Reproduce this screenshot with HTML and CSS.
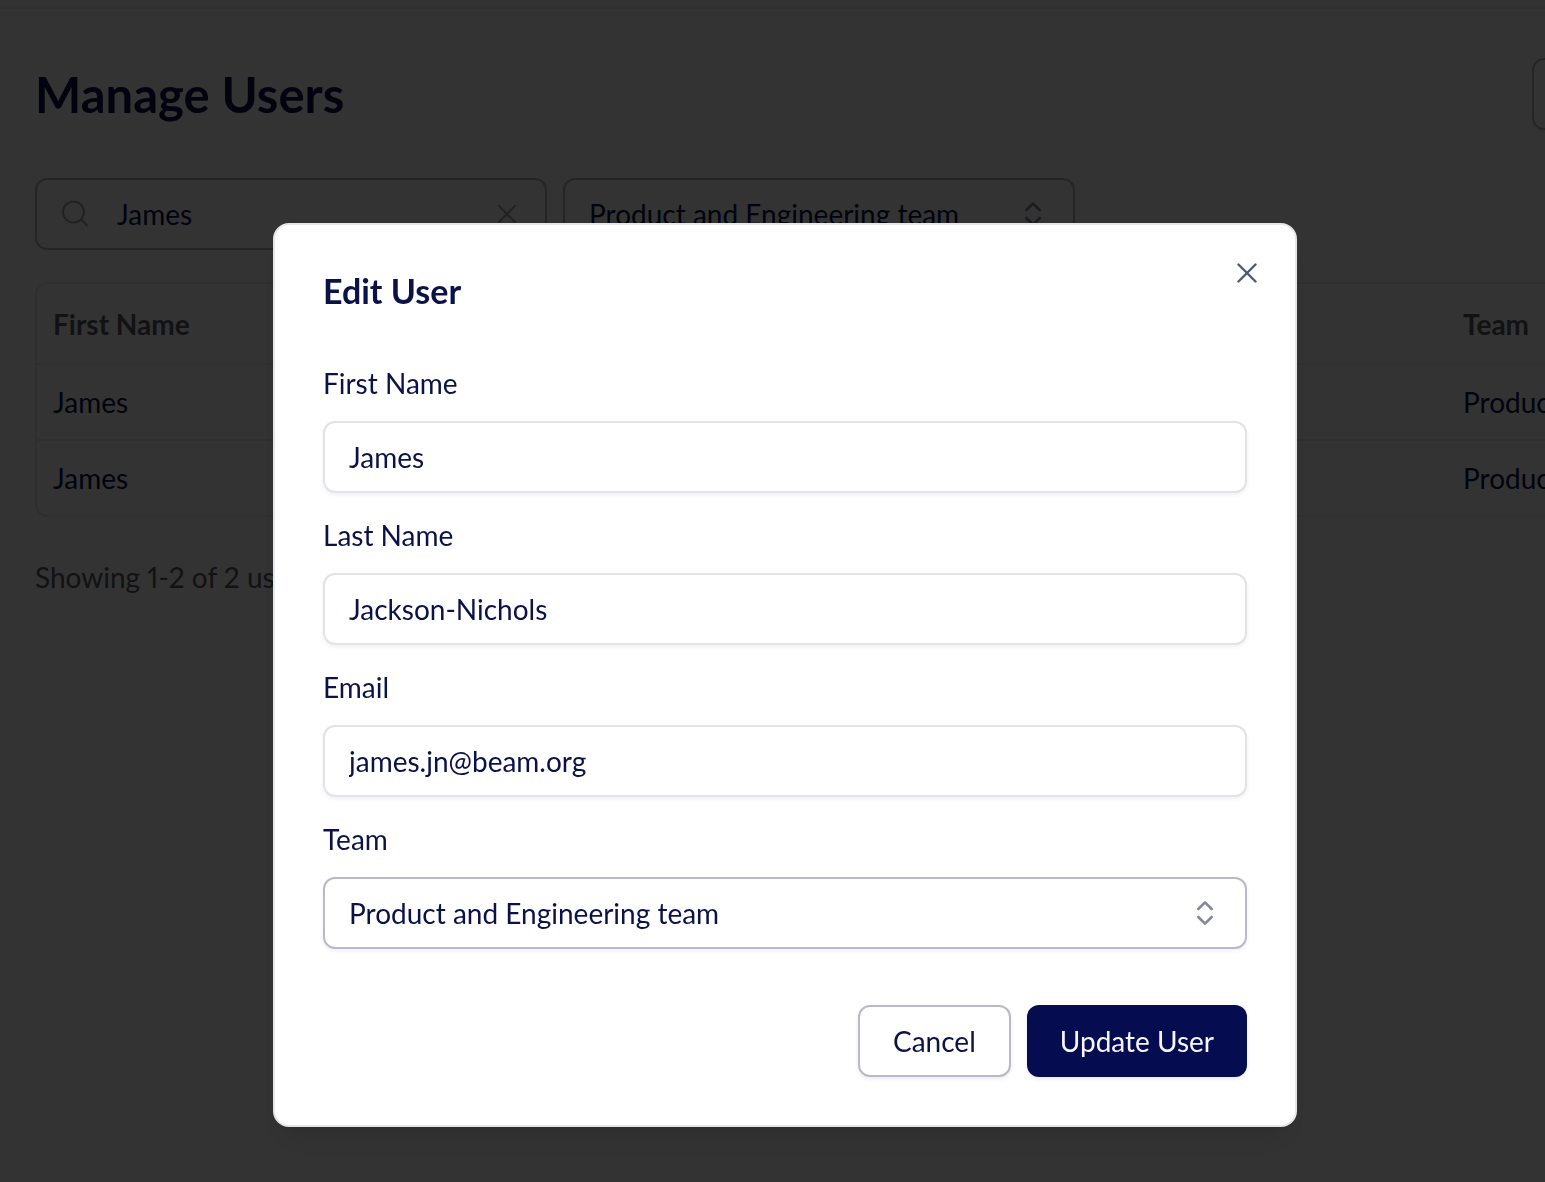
FILE: index.html
```html
<!DOCTYPE html>
<html lang="en">
<head>
  <meta charset="utf-8">
  <meta name="viewport" content="width=device-width, initial-scale=1">
  <title>Manage Users</title>
  <link rel="stylesheet" href="styles.css">
</head>
<body>
  <div class="app">
    <div class="topbar"></div>
    <main class="page">
      <header class="page-header">
        <h1 class="page-title">Manage Users</h1>
        <button class="button button-outline page-action" type="button" aria-label="Invite user"></button>
      </header>

      <div class="filters">
        <div class="search">
          <svg class="search-icon" viewBox="0 0 28 28" aria-hidden="true"><circle cx="12.500" cy="12" r="10.500"/><path d="M20 19.500 26 25.500"/></svg>
          <input class="search-input" type="text" value="James" aria-label="Search users">
          <button class="icon-button" type="button" aria-label="Clear search">
            <svg class="clear-icon" viewBox="0 0 20 20" aria-hidden="true"><path d="M2 2 18 18M18 2 2 18"/></svg>
          </button>
        </div>
        <div class="select filter-select">
          <select class="control control-strong" aria-label="Filter by team">
            <option>Product and Engineering team</option>
          </select>
          <svg class="select-icon" viewBox="0 0 18 26" aria-hidden="true"><path stroke-width="2.600" d="M2.300 9 9 2.300 15.700 9M2.300 17 9 23.700 15.700 17"/></svg>
        </div>
      </div>

      <table class="users">
        <thead>
          <tr><th>First Name</th><th>Last Name</th><th>Email</th><th>Team</th></tr>
        </thead>
        <tbody>
          <tr><td>James</td><td></td><td></td><td>Product and Engineering team</td></tr>
          <tr><td>James</td><td></td><td></td><td>Product and Engineering team</td></tr>
        </tbody>
      </table>
      <p class="summary">Showing 1-2 of 2 users</p>
    </main>
  </div>

  <div class="overlay">
    <form class="modal" role="dialog" aria-modal="true" aria-labelledby="modal-title">
      <button class="icon-button modal-close" type="button" aria-label="Close">
        <svg class="close-icon" viewBox="0 0 20 20" aria-hidden="true"><path stroke-width="2.400" d="M1.500 1.500 18.500 18.500M18.500 1.500 1.500 18.500"/></svg>
      </button>
      <h2 class="modal-title" id="modal-title">Edit User</h2>
      <div class="fields">
        <div class="field">
          <label class="label" for="first-name">First Name</label>
          <input class="control" id="first-name" type="text" value="James">
        </div>
        <div class="field">
          <label class="label" for="last-name">Last Name</label>
          <input class="control" id="last-name" type="text" value="Jackson-Nichols">
        </div>
        <div class="field">
          <label class="label" for="email">Email</label>
          <input class="control" id="email" type="email" value="james.jn@beam.org">
        </div>
        <div class="field">
          <label class="label" for="team">Team</label>
          <div class="select">
            <select class="control control-strong" id="team">
              <option>Product and Engineering team</option>
            </select>
            <svg class="select-icon" viewBox="0 0 18 26" aria-hidden="true"><path stroke-width="2.600" d="M2.300 9 9 2.300 15.700 9M2.300 17 9 23.700 15.700 17"/></svg>
          </div>
        </div>
      </div>
      <div class="modal-actions">
        <button class="button button-outline" type="button">Cancel</button>
        <button class="button button-primary" type="submit">Update User</button>
      </div>
    </form>
  </div>
</body>
</html>
```

FILE: styles.css
```css
:root {
  --ink: #0a1248;
  --navy: #060c50;
  --muted: #5c5d66;
  --line: #e2e3e6;
  --line-strong: #b9bac7;
}

* {
  box-sizing: border-box;
}

body {
  margin: 0;
  background: #fff;
  color: var(--ink);
  font: 400 28px/36px Lato, "Open Sans", sans-serif;
}

input,
select,
button {
  margin: 0;
  color: inherit;
  font: inherit;
}

h1,
h2,
p {
  margin: 0;
}

svg {
  display: block;
  fill: none;
  stroke: currentColor;
  stroke-width: 2;
  stroke-linecap: round;
  stroke-linejoin: round;
}

/* Page */

.app {
  min-height: 100vh;
  overflow: hidden;
}

.topbar {
  height: 9px;
  border-bottom: 2px solid #eeeef4;
  background: #f8f8ff;
}

.page {
  min-width: 1954px;
  padding: 49px 35px;
}

.page-header {
  display: flex;
  align-items: center;
  justify-content: space-between;
}

.page-title {
  font-size: 49px;
  line-height: 72px;
  font-weight: 700;
}

.page-action {
  width: 387px;
}

.filters {
  display: flex;
  gap: 16px;
  margin-top: 48px;
}

.search {
  display: flex;
  align-items: center;
  gap: 28px;
  width: 512px;
  height: 72px;
  padding: 0 24px;
  border: 2px solid var(--line-strong);
  border-radius: 12px;
}

.search-icon {
  width: 28px;
  height: 28px;
  color: #a6a7b0;
}

.search-input {
  flex: 1;
  min-width: 0;
  padding: 0;
  border: 0;
  background: none;
}

.icon-button {
  display: flex;
  padding: 4px;
  border: 0;
  background: none;
}

.clear-icon,
.close-icon {
  width: 20px;
  height: 20px;
}

.clear-icon {
  color: #a6a7b0;
}

.filter-select {
  width: 512px;
}

.users {
  width: 100%;
  margin-top: 32px;
  border: 2px solid #e8e8ec;
  border-radius: 12px;
  border-spacing: 0;
  table-layout: fixed;
}

.users th,
.users td {
  height: 76px;
  padding: 0 16px;
  border-bottom: 2px solid #e8e8ec;
  text-align: left;
}

.users th {
  height: 81px;
  color: var(--muted);
  font-weight: 700;
}

.users tbody tr:last-child td {
  height: 74px;
  border-bottom: 0;
}

.summary {
  margin-top: 42px;
  color: var(--muted);
  font-variant-numeric: proportional-nums;
}

/* Form controls */

.control {
  display: block;
  width: 100%;
  height: 72px;
  padding: 0 24px;
  border: 2px solid var(--line);
  border-radius: 12px;
  background: #fff;
  box-shadow: 0 2px 4px rgb(6 12 80 / 6%);
  appearance: none;
}

.control-strong {
  border-color: var(--line-strong);
}

.select {
  position: relative;
}

.select-icon {
  position: absolute;
  top: 23px;
  right: 33px;
  width: 18px;
  height: 26px;
  color: #8587a0;
  pointer-events: none;
}

.button {
  height: 72px;
  padding: 0 33px;
  border: 0;
  border-radius: 12px;
  box-shadow: 0 2px 4px rgb(6 12 80 / 8%);
}

.button-outline {
  border: 2px solid var(--line-strong);
  background: #fff;
}

.button-primary {
  background: var(--navy);
  color: #f5f6ff;
}

/* Edit dialog */

.overlay {
  position: fixed;
  inset: 0;
  display: flex;
  align-items: flex-start;
  justify-content: center;
  padding: 223px 0 32px 25px;
  overflow: hidden;
  background: rgb(0 0 0 / 80%);
}

.modal {
  position: relative;
  width: 100%;
  max-width: 1024px;
  padding: 48px;
  border: 2px solid #e5e6e9;
  border-radius: 16px;
  background: #fff;
  box-shadow: 0 20px 30px -6px rgb(0 0 0 / 10%), 0 8px 12px -8px rgb(0 0 0 / 10%);
}

.modal-close {
  position: absolute;
  top: 34px;
  right: 34px;
  color: #52557f;
}

.modal-title {
  font-size: 34px;
  line-height: 36px;
  font-weight: 700;
}

.fields {
  display: grid;
  gap: 24px;
  margin-top: 56px;
}

.field {
  display: grid;
  gap: 20px;
}

.modal-actions {
  display: flex;
  justify-content: flex-end;
  gap: 16px;
  margin-top: 56px;
}
```
